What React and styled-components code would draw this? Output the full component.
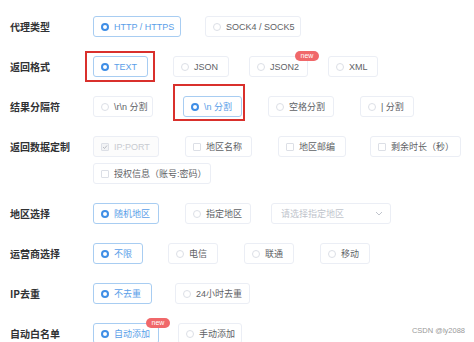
import React from "react";
import styled, { createGlobalStyle } from "styled-components";

const GlobalStyle = createGlobalStyle`
  html, body {
    margin: 0;
    padding: 0;
    background: #ffffff;
  }
  body {
    font-family: "Liberation Sans", "Noto Sans CJK SC", sans-serif;
  }
`;

const rows = [
  {
    label: "代理类型",
    kind: "radio",
    options: [
      { text: "HTTP / HTTPS", w: 88, on: true },
      { text: "SOCK4 / SOCK5", w: 96, gap: 24 },
    ],
  },
  {
    label: "返回格式",
    kind: "radio",
    options: [
      { text: "TEXT", w: 55, on: true, mark: { t: -6, r: -8, b: -6, l: -9 } },
      { text: "JSON", w: 56 },
      { text: "JSON2", w: 59, gap: 20, badge: true },
      { text: "XML", w: 50, gap: 20 },
    ],
  },
  {
    label: "结果分隔符",
    kind: "radio",
    options: [
      { text: "\\r\\n 分割", w: 60 },
      { text: "\\n 分割", w: 59, gap: 30, on: true, mark: { t: -13, r: -4, b: -5, l: -11 } },
      { text: "空格分割", w: 66, gap: 26 },
      { text: "| 分割", w: 54, gap: 26 },
    ],
  },
  {
    label: "返回数据定制",
    kind: "check",
    options: [
      { text: "IP:PORT", w: 66, on: true, disabled: true },
      { text: "地区名称", w: 67, gap: 26 },
      { text: "地区邮编", w: 68, gap: 26 },
      { text: "剩余时长（秒）", w: 91, gap: 24 },
      { text: "授权信息（账号:密码）", w: 118 },
    ],
  },
  {
    label: "地区选择",
    kind: "radio",
    options: [
      { text: "随机地区", w: 66, on: true },
      { text: "指定地区", w: 66, gap: 26 },
    ],
    select: "请选择指定地区",
  },
  {
    label: "运营商选择",
    kind: "radio",
    options: [
      { text: "不限", w: 50, on: true },
      { text: "电信", w: 50 },
      { text: "联通", w: 50, gap: 26 },
      { text: "移动", w: 50, gap: 26 },
    ],
  },
  {
    label: "IP去重",
    kind: "radio",
    options: [
      { text: "不去重", w: 59, on: true },
      { text: "24小时去重", w: 75, gap: 23 },
    ],
  },
  {
    label: "自动白名单",
    kind: "radio",
    options: [
      { text: "自动添加", w: 66, on: true, badge: true },
      { text: "手动添加", w: 64, gap: 19 },
    ],
  },
];

const Page = styled.div`
  position: relative;
  width: 474px;
  height: 342px;
  overflow: hidden;
  padding-top: 16px;
  box-sizing: border-box;
`;

const FormRow = styled.div`
  display: flex;
  align-items: flex-start;
  margin-bottom: 19px;
`;

const Label = styled.div`
  width: 93px;
  padding-left: 10px;
  box-sizing: border-box;
  flex-shrink: 0;
  height: 21px;
  line-height: 21px;
  font-size: 10px;
  font-weight: 700;
  color: #303133;
  font-family: "Noto Sans CJK SC", "Liberation Sans", sans-serif;
`;

const Options = styled.div`
  display: flex;
  flex-wrap: wrap;
  row-gap: 6px;
  width: 380px;
`;

const Option = styled.div`
  position: relative;
  display: flex;
  align-items: center;
  gap: 5px;
  width: ${(p) => p.$w}px;
  height: 21px;
  margin-left: ${(p) => p.$gap}px;
  padding-left: 7px;
  box-sizing: border-box;
  border: 1px solid ${(p) => (p.$on && !p.$disabled ? "#a8cdf2" : "#ebeef5")};
  border-radius: 3px;
  background: ${(p) => (p.$disabled ? "#fcfcfc" : "#fff")};
  font-size: 9px;
  white-space: nowrap;
  color: ${(p) => (p.$disabled ? "#c8cbd1" : p.$on ? "#5a9ee8" : "#606266")};

  &:first-child {
    margin-left: 0;
  }
`;

const WrapOption = styled(Option)`
  margin-left: 0;
`;

const Dot = styled.span`
  width: 8px;
  height: 8px;
  border-radius: 50%;
  box-sizing: border-box;
  flex-shrink: 0;
  border: ${(p) => (p.$on ? "2.5px solid #3f8ee6" : "1px solid #dcdfe6")};
  background: #fff;
`;

const Box = styled.span`
  display: flex;
  align-items: center;
  justify-content: center;
  width: 8px;
  height: 8px;
  box-sizing: border-box;
  flex-shrink: 0;
  border: 1px solid #dcdfe6;
  border-radius: 1px;
  background: ${(p) => (p.$disabled ? "#f2f3f5" : "#fff")};
`;

const Badge = styled.span`
  position: absolute;
  top: -6px;
  right: -12px;
  width: 24px;
  height: 10px;
  border-radius: 5px;
  background: #f0686a;
  color: #fff;
  font-size: 7px;
  line-height: 10px;
  text-align: center;
`;

const Highlight = styled.span`
  position: absolute;
  top: ${(p) => p.$m.t}px;
  right: ${(p) => p.$m.r}px;
  bottom: ${(p) => p.$m.b}px;
  left: ${(p) => p.$m.l}px;
  border: 2px solid #d9302c;
  pointer-events: none;
`;

const Select = styled.div`
  display: flex;
  align-items: center;
  justify-content: space-between;
  width: 120px;
  height: 21px;
  margin-left: 20px;
  padding: 0 7px 0 9px;
  box-sizing: border-box;
  border: 1px solid #ebeef5;
  border-radius: 3px;
  font-size: 9px;
  color: #c0c4cc;
`;

const Watermark = styled.div`
  position: absolute;
  right: 9px;
  bottom: 7px;
  font-size: 7.5px;
  color: #9a9a9a;
`;

const Check = () => (
  <svg width="6" height="6" viewBox="0 0 6 6">
    <path d="M1 3 L2.5 4.5 L5 1.5" fill="none" stroke="#b9bcc2" strokeWidth="1" />
  </svg>
);

const Chevron = () => (
  <svg width="8" height="5" viewBox="0 0 8 5">
    <path d="M1 1 L4 4 L7 1" fill="none" stroke="#c0c4cc" strokeWidth="1" />
  </svg>
);

const renderOption = (row, o, i) => {
  const Comp = row.kind === "check" && i === 4 ? WrapOption : Option;
  return (
    <Comp
      key={o.text}
      $w={o.w}
      $gap={o.gap ?? 25}
      $on={o.on}
      $disabled={o.disabled}
    >
      {row.kind === "radio" ? (
        <Dot $on={o.on} />
      ) : (
        <Box $disabled={o.disabled}>{o.on && <Check />}</Box>
      )}
      <span>{o.text}</span>
      {o.badge && <Badge>new</Badge>}
      {o.mark && <Highlight $m={o.mark} />}
    </Comp>
  );
};

export default function App() {
  return (
    <>
      <GlobalStyle />
      <Page>
        {rows.map((row) => (
          <FormRow key={row.label}>
            <Label>{row.label}</Label>
            <Options>
              {row.options.map((o, i) => renderOption(row, o, i))}
              {row.select && (
                <Select>
                  <span>{row.select}</span>
                  <Chevron />
                </Select>
              )}
            </Options>
          </FormRow>
        ))}
        <Watermark>CSDN @ly2088</Watermark>
      </Page>
    </>
  );
}
